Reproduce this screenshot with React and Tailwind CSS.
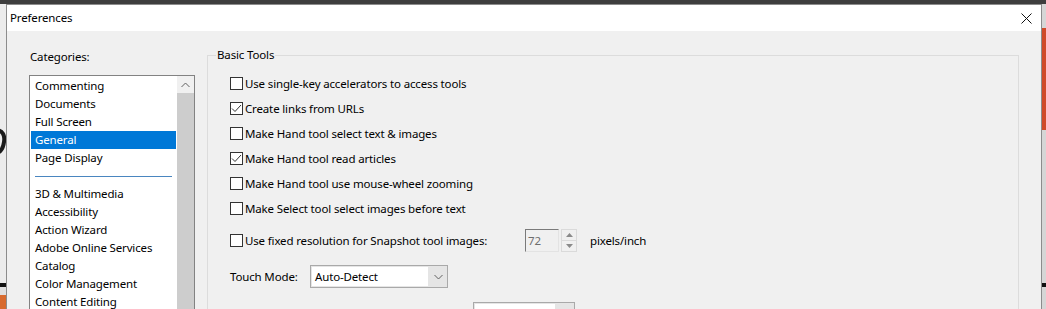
import { useState } from 'react'

const categoriesTop = ['Commenting', 'Documents', 'Full Screen', 'General', 'Page Display']
const categoriesBottom = [
  '3D & Multimedia',
  'Accessibility',
  'Action Wizard',
  'Adobe Online Services',
  'Catalog',
  'Color Management',
  'Content Editing',
]

const basicTools = [
  { label: 'Use single-key accelerators to access tools', checked: false },
  { label: 'Create links from URLs', checked: true },
  { label: 'Make Hand tool select text & images', checked: false },
  { label: 'Make Hand tool read articles', checked: true },
  { label: 'Make Hand tool use mouse-wheel zooming', checked: false },
  { label: 'Make Select tool select images before text', checked: false },
]

function Checkbox({ checked }) {
  return (
    <span className="w-[13px] h-[13px] shrink-0 border border-[#333333] bg-white flex items-center justify-center">
      {checked && (
        <svg width="11" height="11" viewBox="0 0 11 11">
          <path d="M1 5.5 L4 8.5 L10 2" fill="none" stroke="#333333" strokeWidth="1" />
        </svg>
      )}
    </span>
  )
}

function Chevron({ up }) {
  return (
    <svg width="9" height="6" viewBox="0 0 9 6">
      <path d={up ? 'M0.5 5 L4.5 1 L8.5 5' : 'M0.5 1 L4.5 5 L8.5 1'} fill="none" stroke="#606060" strokeWidth="1" />
    </svg>
  )
}

function Combo({ value, width }) {
  return (
    <div className={`flex h-[23px] border border-[#a9a9a9] bg-[#e5e5e5] ${width}`}>
      <div className="flex-1 m-[1px] bg-white flex items-center pl-[3px]">{value}</div>
      <div className="w-[18px] flex items-center justify-center">
        <Chevron />
      </div>
    </div>
  )
}

export default function App() {
  const [selected, setSelected] = useState('General')
  const [tools, setTools] = useState(basicTools)

  const toggle = (i) => setTools(tools.map((t, j) => (j === i ? { ...t, checked: !t.checked } : t)))

  return (
    <div className="relative w-[1046px] h-[309px] overflow-hidden bg-[#ececec] text-[11.5px] leading-[16px] tracking-[-0.15px] text-black font-['Segoe_UI','Noto_Sans',sans-serif]">
      {/* Desktop behind the dialog */}
      <div className="absolute inset-x-0 top-0 h-[4px] bg-[#3e3e3e]" />
      <svg className="absolute left-0 top-[128px]" width="6" height="28" viewBox="0 0 6 28">
        <path d="M-4 2 C3 2 5 8 4 14 C3 22 -1 25 -4 25" fill="none" stroke="#1a1a1a" strokeWidth="4" />
      </svg>
      <div className="absolute left-0 top-[283px] w-[6px] h-[4px] bg-[#111111]" />
      <div className="absolute left-0 top-[287px] w-[6px] h-[22px] bg-[#e0e0e0]">
        <div className="absolute left-0 top-[8px] w-[6px] h-[14px] bg-[#d86a2e]" />
      </div>
      <div className="absolute right-0 top-[4px] w-[5px] h-[305px] bg-[#d6d6d6]">
        <div className="absolute left-0 top-[24px] w-[5px] h-[102px] bg-[#cf4a2a]" />
        <div className="absolute left-0 top-[279px] w-[5px] h-[4px] bg-[#111111]" />
      </div>

      {/* Preferences dialog */}
      <div className="absolute left-[6px] top-[4px] w-[1036px] h-[330px] border border-[#8c8c8c] bg-[#f0f0f0] flex flex-col">
        <div className="h-[26px] shrink-0 bg-white flex items-center justify-between pl-[3px] pr-[9px]">
          <span>Preferences</span>
          <svg width="11" height="11" viewBox="0 0 11 11">
            <path d="M0.5 0.5 L10.5 10.5 M10.5 0.5 L0.5 10.5" stroke="#111111" strokeWidth="1" />
          </svg>
        </div>

        <div className="flex flex-1 pl-[22px] pr-[22px]">
          {/* Categories */}
          <div className="w-[166px] pt-[18px] flex flex-col">
            <div className="pl-[1px]">Categories:</div>
            <div className="mt-[10px] flex-1 border border-[#828282] bg-white flex">
              <ul className="w-[145px] ml-[1px] pt-[1px]">
                {categoriesTop.map((c) => (
                  <li
                    key={c}
                    onClick={() => setSelected(c)}
                    className={`h-[18px] pl-[4px] flex items-center ${selected === c ? 'bg-[#0078d7] text-white' : ''}`}
                  >
                    {c}
                  </li>
                ))}
                <li className="h-[18px] flex items-center pl-[4px] pr-[4px]">
                  <div className="h-[1px] w-full bg-[#4a86c0]" />
                </li>
                {categoriesBottom.map((c) => (
                  <li
                    key={c}
                    onClick={() => setSelected(c)}
                    className={`h-[18px] pl-[4px] flex items-center whitespace-nowrap ${selected === c ? 'bg-[#0078d7] text-white' : ''}`}
                  >
                    {c}
                  </li>
                ))}
              </ul>
              <div className="w-[17px] ml-[1px] flex flex-col">
                <div className="h-[17px] bg-[#f0f0f0] flex items-center justify-center">
                  <Chevron up />
                </div>
                <div className="flex-1 bg-[#cdcdcd]" />
              </div>
            </div>
          </div>

          {/* Basic Tools group */}
          <div className="flex-1 ml-[12px] mt-[24px] relative border border-[#dcdcdc]">
            <span className="absolute -top-[9px] left-[8px] px-[1px] bg-[#f0f0f0]">Basic Tools</span>
            <div className="pl-[22px] pt-[15px] flex flex-col">
              {tools.map((t, i) => (
                <label key={t.label} className="h-[25px] flex items-center gap-[2px]" onClick={() => toggle(i)}>
                  <Checkbox checked={t.checked} />
                  <span>{t.label}</span>
                </label>
              ))}

              <div className="mt-[8px] h-[23px] flex items-center">
                <div className="w-[295px] flex items-center gap-[2px]">
                  <Checkbox checked={false} />
                  <span>Use fixed resolution for Snapshot tool images:</span>
                </div>
                <div className="w-[34px] h-[23px] border border-t-[#7a7a7a] border-l-[#7a7a7a] border-r-[#e3e3e3] border-b-[#e3e3e3] bg-[#f0f0f0] text-[#6d6d6d] flex items-center pl-[2px]">
                  72
                </div>
                <div className="ml-[2px] w-[16px] h-[23px] flex flex-col border border-[#dadada]">
                  <div className="flex-1 flex items-center justify-center border-b border-[#dadada]">
                    <svg width="7" height="4" viewBox="0 0 7 4"><path d="M0 4 L3.5 0 L7 4 Z" fill="#8a8a8a" /></svg>
                  </div>
                  <div className="flex-1 flex items-center justify-center">
                    <svg width="7" height="4" viewBox="0 0 7 4"><path d="M0 0 L3.5 4 L7 0 Z" fill="#8a8a8a" /></svg>
                  </div>
                </div>
                <span className="ml-[13px]">pixels/inch</span>
              </div>

              <div className="mt-[13px] h-[23px] flex items-center">
                <span className="w-[80px]">Touch Mode:</span>
                <Combo value="Auto-Detect" width="w-[138px]" />
              </div>

              <div className="mt-[14px] h-[23px] flex items-center">
                <span className="w-[243px] whitespace-nowrap">Scale factor to apply to large font elements:</span>
                <Combo value="Large Fonts" width="w-[102px]" />
              </div>
            </div>
          </div>
        </div>
      </div>
    </div>
  )
}
